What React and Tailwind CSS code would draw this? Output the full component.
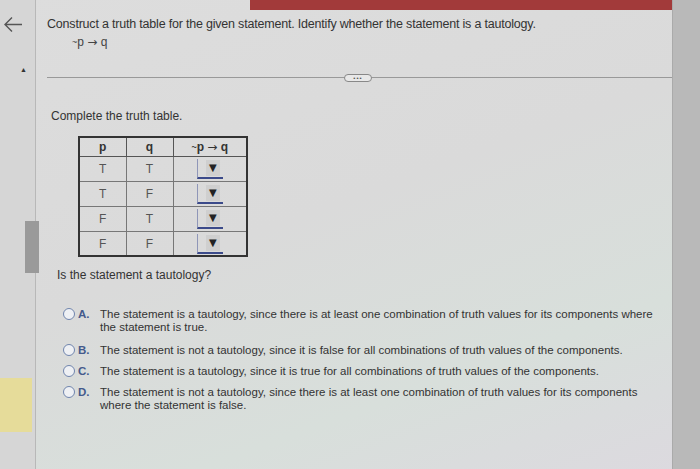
import React from "react";

const ROWS = [
  ["T", "T"],
  ["T", "F"],
  ["F", "T"],
  ["F", "F"],
];

const OPTIONS = [
  {
    key: "A",
    lines: [
      "The statement is a tautology, since there is at least one combination of truth values for its components where",
      "the statement is true.",
    ],
  },
  {
    key: "B",
    lines: ["The statement is not a tautology, since it is false for all combinations of truth values of the components."],
  },
  {
    key: "C",
    lines: ["The statement is a tautology, since it is true for all combinations of truth values of the components."],
  },
  {
    key: "D",
    lines: [
      "The statement is not a tautology, since there is at least one combination of truth values for its components",
      "where the statement is false.",
    ],
  },
];

function Implies() {
  return (
    <span className="text-[12px]">
      <span className="relative top-[-1px] text-[9px]">~</span>p{" "}
      <span style={{ fontFamily: '"DejaVu Sans", sans-serif' }} className="text-[12px] font-normal">
        →
      </span>{" "}
      q
    </span>
  );
}

function Dropdown() {
  return (
    <div className="mx-auto flex h-[20px] w-[26px] items-center justify-end border-b-2 border-l border-b-[#3b4a8a] border-l-[#8f96b8] pr-[3px]">
      <span className="flex h-[16px] w-[14px] items-center justify-center bg-[#cfcfcf]">
        <span className="text-[10px] leading-none text-[#222]" style={{ fontFamily: '"DejaVu Sans", sans-serif' }}>
          ▼
        </span>
      </span>
    </div>
  );
}

export default function App() {
  return (
    <div
      className="relative flex h-[469px] w-[700px] overflow-hidden bg-[linear-gradient(160deg,#dddddd_0%,#dadada_45%,#d8dfdb_75%,#dcd9df_100%)] text-[#333]"
      style={{ fontFamily: '"Liberation Sans", Arial, sans-serif' }}
    >
      <div className="absolute right-0 top-0 h-[10px] w-[450px] bg-[#a23a3a]" />

      {/* left rail */}
      <div className="flex w-[36px] shrink-0 flex-col border-r border-[#b8b8b8] bg-[#d6d6d6]">
        <svg className="ml-[3px] mt-[16px]" width="20" height="17" viewBox="0 0 20 17" fill="none" stroke="#555" strokeWidth="1.4">
          <path d="M19 8.5H2M9 1.5L2 8.5L9 15.5" />
        </svg>
        <div className="ml-[20px] mt-[33px] text-[7px] leading-none text-[#333]">▲</div>
        <div className="ml-[25px] mt-[148px] h-[52px] w-[14px] bg-[#9a9a9a]" />
        <div className="mt-[105px] h-[54px] w-[32px] bg-[#e6dc9a]" />
      </div>

      {/* main */}
      <div className="flex flex-1 flex-col pl-[11px] pt-[15px]">
        <p className="text-[12.5px] tracking-[-0.2px] text-[#333]">
          Construct a truth table for the given statement. Identify whether the statement is a tautology.
        </p>
        <p className="ml-[25px] text-[12px] leading-[16px] text-[#444]">
          <Implies />
        </p>

        <div className="relative mt-[26px] mr-[-8px] border-t border-[#999]">
          <div className="absolute left-[297px] top-[-4px] flex h-[8px] w-[28px] items-center justify-center rounded-full border border-[#888] bg-[#e8e8e8] text-[6px] leading-none tracking-[1px] text-[#555]">
            •••
          </div>
        </div>

        <p className="ml-[4px] mt-[29px] text-[12px] text-[#333]">Complete the truth table.</p>

        <table className="ml-[31px] mt-[11px] w-[170px] border-collapse border-2 border-[#333] text-[12px]">
          <thead>
            <tr className="h-[16px]">
              <th className="w-[47px] border border-[#555] font-bold text-[#333]">p</th>
              <th className="w-[47px] border border-[#555] font-bold text-[#333]">q</th>
              <th className="border border-[#555] font-bold text-[#333]">
                <Implies />
              </th>
            </tr>
          </thead>
          <tbody>
            {ROWS.map(([p, q], i) => (
              <tr key={i} className="h-[25px]">
                <td className="border border-[#777] text-center text-[#555]">{p}</td>
                <td className="border border-[#777] text-center text-[#555]">{q}</td>
                <td className="border border-[#777]">
                  <Dropdown />
                </td>
              </tr>
            ))}
          </tbody>
        </table>

        <p className="ml-[10px] mt-[9px] text-[12px] text-[#333]">Is the statement a tautology?</p>

        <div className="ml-[16px] mt-[24px] flex flex-col gap-[8px]">
          {OPTIONS.map((o, idx) => (
            <div key={o.key} className={`flex items-start text-[11.5px] leading-[13px] ${idx === 0 ? "pb-[2px]" : ""}`}>
              <span className="h-[12px] w-[12px] shrink-0 rounded-full border-[1.5px] border-[#7085ad] bg-[#eef0f4]" />
              <span className="ml-[3px] w-[22px] shrink-0 font-bold text-[#445a8c]">{o.key}.</span>
              <span className="text-[#333]">
                {o.lines.map((l, i) => (
                  <span key={i} className="block">
                    {l}
                  </span>
                ))}
              </span>
            </div>
          ))}
        </div>
      </div>

      {/* right strip */}
      <div className="relative z-10 w-[28px] shrink-0 border-l border-[#aaa] bg-[#b9b9b9]" />
    </div>
  );
}
